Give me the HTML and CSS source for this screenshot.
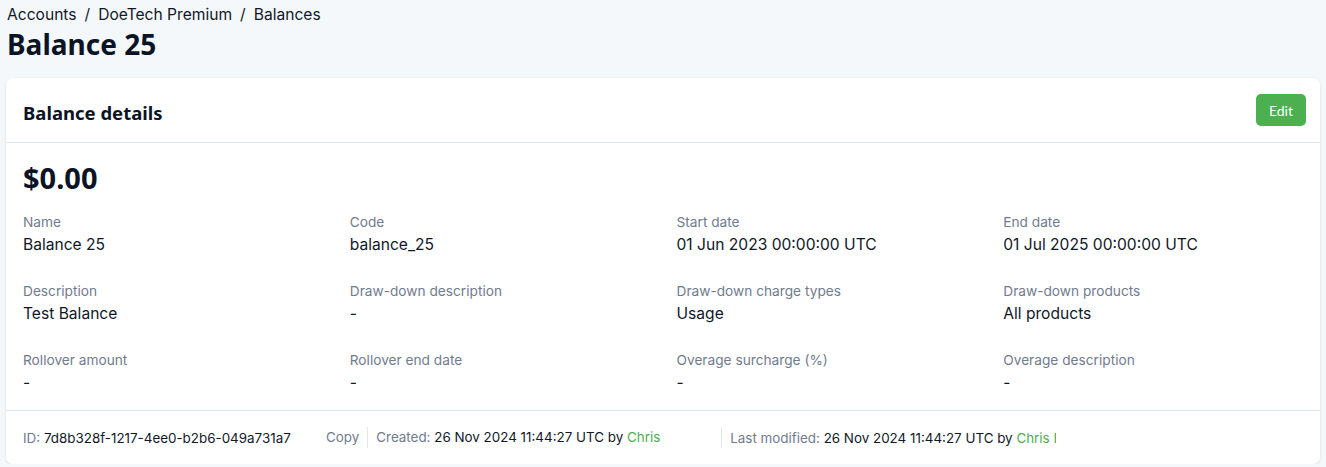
FILE: index.html
```html
<!DOCTYPE html>
<html lang="en">
<head>
<meta charset="utf-8">
<title>Balance 25</title>
<link rel="stylesheet" href="styles.css">
</head>
<body>
<div class="page">
  <nav class="crumbs">
    <span>Accounts</span><span class="sep">/</span><span>DoeTech Premium</span><span class="sep">/</span><span>Balances</span>
  </nav>
  <h1 class="title">Balance 25</h1>
  <section class="card">
    <header class="card-head">
      <h2>Balance details</h2>
      <button class="btn-edit">Edit</button>
    </header>
    <div class="card-body">
      <div class="amount">$0.00</div>
      <dl class="grid">
        <div class="field"><dt>Name</dt><dd>Balance 25</dd></div>
        <div class="field"><dt>Code</dt><dd>balance_25</dd></div>
        <div class="field"><dt>Start date</dt><dd>01 Jun 2023 00:00:00 UTC</dd></div>
        <div class="field"><dt>End date</dt><dd>01 Jul 2025 00:00:00 UTC</dd></div>
        <div class="field"><dt>Description</dt><dd>Test Balance</dd></div>
        <div class="field"><dt>Draw-down description</dt><dd>-</dd></div>
        <div class="field"><dt>Draw-down charge types</dt><dd>Usage</dd></div>
        <div class="field"><dt>Draw-down products</dt><dd>All products</dd></div>
        <div class="field"><dt>Rollover amount</dt><dd>-</dd></div>
        <div class="field"><dt>Rollover end date</dt><dd>-</dd></div>
        <div class="field"><dt>Overage surcharge (%)</dt><dd>-</dd></div>
        <div class="field"><dt>Overage description</dt><dd>-</dd></div>
      </dl>
    </div>
    <footer class="card-foot">
      <div class="meta meta-id"><span class="muted">ID:</span> <span>7d8b328f-1217-4ee0-b2b6-049a731a7</span></div>
      <div class="meta meta-copy muted">Copy</div>
      <div class="meta meta-created"><span class="muted">Created:</span> 26 Nov 2024 11:44:27 UTC by <span class="user">Chris</span></div>
      <div class="meta meta-mod"><span class="muted">Last modified:</span> 26 Nov 2024 11:44:27 UTC by <span class="user">Chris H</span></div>
    </footer>
  </section>
</div>
</body>
</html>
```

FILE: styles.css
```css
* { box-sizing: border-box; }
html, body { margin: 0; padding: 0; }
body {
  background: #f5f8fb;
  font-family: Inter, "Liberation Sans", sans-serif;
  color: #101828;
}
.page {
  padding: 4px 6px 0 6px;
}
.crumbs {
  font-size: 15.6px;
  line-height: 22px;
  padding-left: 1px;
  color: #101828;
}
.crumbs .sep { margin: 0 8px; }
.title {
  margin: 0 0 0 1px;
  font-family: "Noto Sans", sans-serif;
  font-weight: 700;
  font-size: 28px;
  line-height: 36px;
  color: #0b1424;
}
.card {
  margin-top: 16px;
  background: #fff;
  border-radius: 7px;
  box-shadow: 0 1px 3px rgba(16, 24, 40, 0.12);
}
.card-head {
  display: flex;
  align-items: center;
  justify-content: space-between;
  height: 65px;
  padding: 0 14px 0 17px;
  border-bottom: 1px solid #e2e8f0;
}
.card-head h2 {
  margin: 0;
  padding-top: 4px;
  font-family: "Noto Sans", sans-serif;
  font-size: 18.5px;
  font-weight: 700;
  color: #0b1424;
}
.btn-edit {
  width: 50px;
  height: 32px;
  border: 0;
  border-radius: 5px;
  background: #4caf50;
  color: #fff;
  font-family: Lato, sans-serif;
  font-size: 14px;
  padding: 0;
}
.card-body {
  padding: 17px 14px 15px 17px;
}
.amount {
  font-family: "Noto Sans", sans-serif;
  font-weight: 700;
  font-size: 29px;
  line-height: 36px;
  color: #0b1424;
}
.grid {
  margin: 16px 0 0 0;
  display: grid;
  grid-template-columns: repeat(4, 1fr);
  column-gap: 24px;
  row-gap: 24px;
}
.field dt {
  font-size: 13.7px;
  line-height: 20px;
  color: #717b8e;
}
.field dd {
  margin: 1px 0 0 0;
  font-size: 15.6px;
  line-height: 24px;
  color: #101828;
}
.card-foot {
  display: flex;
  align-items: center;
  height: 54px;
  padding: 0 14px 0 17px;
  border-top: 1px solid #e2e8f0;
  font-size: 13.4px;
  color: #101828;
}
.meta { white-space: nowrap; }
.muted { color: #717b8e; }
.user { color: #4caf50; }
.meta-id { width: 303px; }
.meta-copy { padding-right: 8px; border-right: 1px solid #e2e8f0; line-height: 21px; }
.meta-created { width: 354px; padding-left: 8px; border-right: 1px solid #e2e8f0; line-height: 21px; }
.meta-mod { width: 334px; overflow: hidden; padding-left: 8px; }
```
